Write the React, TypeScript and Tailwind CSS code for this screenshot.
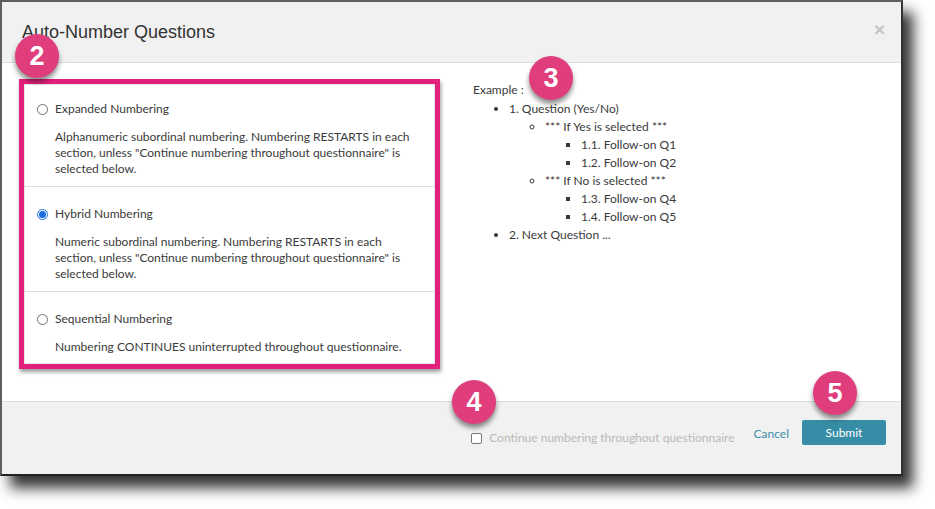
const rows = [
  {
    label: 'Expanded Numbering',
    desc: 'Alphanumeric subordinal numbering. Numbering RESTARTS in each section, unless "Continue numbering throughout questionnaire" is selected below.',
    checked: false,
    first: true,
  },
  {
    label: 'Hybrid Numbering',
    desc: 'Numeric subordinal numbering. Numbering RESTARTS in each section, unless "Continue numbering throughout questionnaire" is selected below.',
    checked: true,
    first: false,
  },
  {
    label: 'Sequential Numbering',
    desc: 'Numbering CONTINUES uninterrupted throughout questionnaire.',
    checked: false,
    first: false,
  },
]

function Badge({ n, className }: { n: string; className: string }) {
  return (
    <div
      className={`absolute w-[44px] h-[44px] rounded-full bg-[#e03d7c] text-white flex items-center justify-center text-[27px] font-bold leading-none shadow-[0_4px_5px_rgba(0,0,0,0.45)] ${className}`}
      style={{ fontFamily: '"Liberation Sans", Arial, sans-serif' }}
    >
      {n}
    </div>
  )
}

function Radio({ checked }: { checked: boolean }) {
  return checked ? (
    <span className="w-[11px] h-[11px] rounded-full border border-[#1a6fe0] flex items-center justify-center shrink-0">
      <span className="w-[7px] h-[7px] rounded-full bg-[#1a6fe0]" />
    </span>
  ) : (
    <span className="w-[11px] h-[11px] rounded-full border border-[#6f6f6f] bg-white shrink-0" />
  )
}

export default function App() {
  return (
    <div
      className="relative w-[935px] h-[509px] bg-white overflow-hidden text-[#3a3a3a]"
      style={{ fontFamily: 'Lato, "Noto Sans", sans-serif' }}
    >
      <div className="flex flex-col w-[903px] h-[476px] border-2 border-[#5e5e5e] border-r-[#333] border-b-[#222] bg-white shadow-[10px_12px_13px_rgba(0,0,0,0.8)]">
        {/* Header */}
        <div className="h-[61px] shrink-0 flex items-center justify-between pl-5 pr-[16px] bg-[#f1f1f1] border-b border-[#dcdcdc]">
          <h1
            className="text-[18px] text-[#333] font-normal"
            style={{ fontFamily: '"Liberation Sans", Arial, sans-serif' }}
          >
            Auto-Number Questions
          </h1>
          <span
            className="text-[#c4c4c4] text-[19px] font-bold leading-none -mt-[5px]"
            style={{ fontFamily: '"Liberation Sans", Arial, sans-serif' }}
          >
            ×
          </span>
        </div>

        {/* Body */}
        <div className="h-[338px] shrink-0 flex pl-[17px] pt-4">
          <div className="w-[421px] h-[290px] shrink-0 border-[5px] border-[#e3207b] bg-white shadow-[1px_3px_4px_rgba(0,0,0,0.4)]">
            <div className="h-full border border-[#e5e5e5] flex flex-col">
              {rows.map((row, i) => (
                <div
                  key={row.label}
                  className={`px-3 pb-[9px] ${row.first ? 'pt-[16px]' : 'pt-[19px]'} ${i < rows.length - 1 ? 'border-b border-[#dddddd]' : ''}`}
                >
                  <div className="flex items-center gap-[7px] text-[12px] leading-4">
                    <Radio checked={row.checked} />
                    <span>{row.label}</span>
                  </div>
                  <p className="mt-3 pl-[18px] text-[12px] leading-4">{row.desc}</p>
                </div>
              ))}
            </div>
          </div>

          <div className="ml-[33px] pt-[2px] text-[12px] leading-[18px]">
            <p className="mb-px">Example :</p>
            <ul className="list-disc pl-9">
              <li>
                1. Question (Yes/No)
                <ul className="list-[circle] pl-9">
                  <li>
                    *** If Yes is selected ***
                    <ul className="list-[square] pl-9">
                      <li>1.1. Follow-on Q1</li>
                      <li>1.2. Follow-on Q2</li>
                    </ul>
                  </li>
                  <li>
                    *** If No is selected ***
                    <ul className="list-[square] pl-9">
                      <li>1.3. Follow-on Q4</li>
                      <li>1.4. Follow-on Q5</li>
                    </ul>
                  </li>
                </ul>
              </li>
              <li>2. Next Question ...</li>
            </ul>
          </div>
        </div>

        {/* Footer */}
        <div className="flex-1 flex justify-end items-start pt-[18px] pr-[15px] bg-[#f1f1f1] border-t border-[#dcdcdc]">
          <label className="flex items-center gap-[7px] mt-[10px] text-[12px] leading-4 text-[#b9b9b9]">
            <span className="w-[11px] h-[11px] rounded-[2px] border border-[#777] bg-white" />
            Continue numbering throughout questionnaire
          </label>
          <button className="ml-[19px] mt-[6px] text-[12px] leading-4 text-[#3a8ea8]">Cancel</button>
          <button className="ml-[13px] w-[84px] h-[25px] rounded-[2px] bg-[#378ca6] text-white text-[12px] leading-none">
            Submit
          </button>
        </div>
      </div>

      <Badge n="2" className="left-[15px] top-[34px]" />
      <Badge n="3" className="left-[529px] top-[56px]" />
      <Badge n="4" className="left-[452px] top-[380px]" />
      <Badge n="5" className="left-[813px] top-[371px]" />
    </div>
  )
}
